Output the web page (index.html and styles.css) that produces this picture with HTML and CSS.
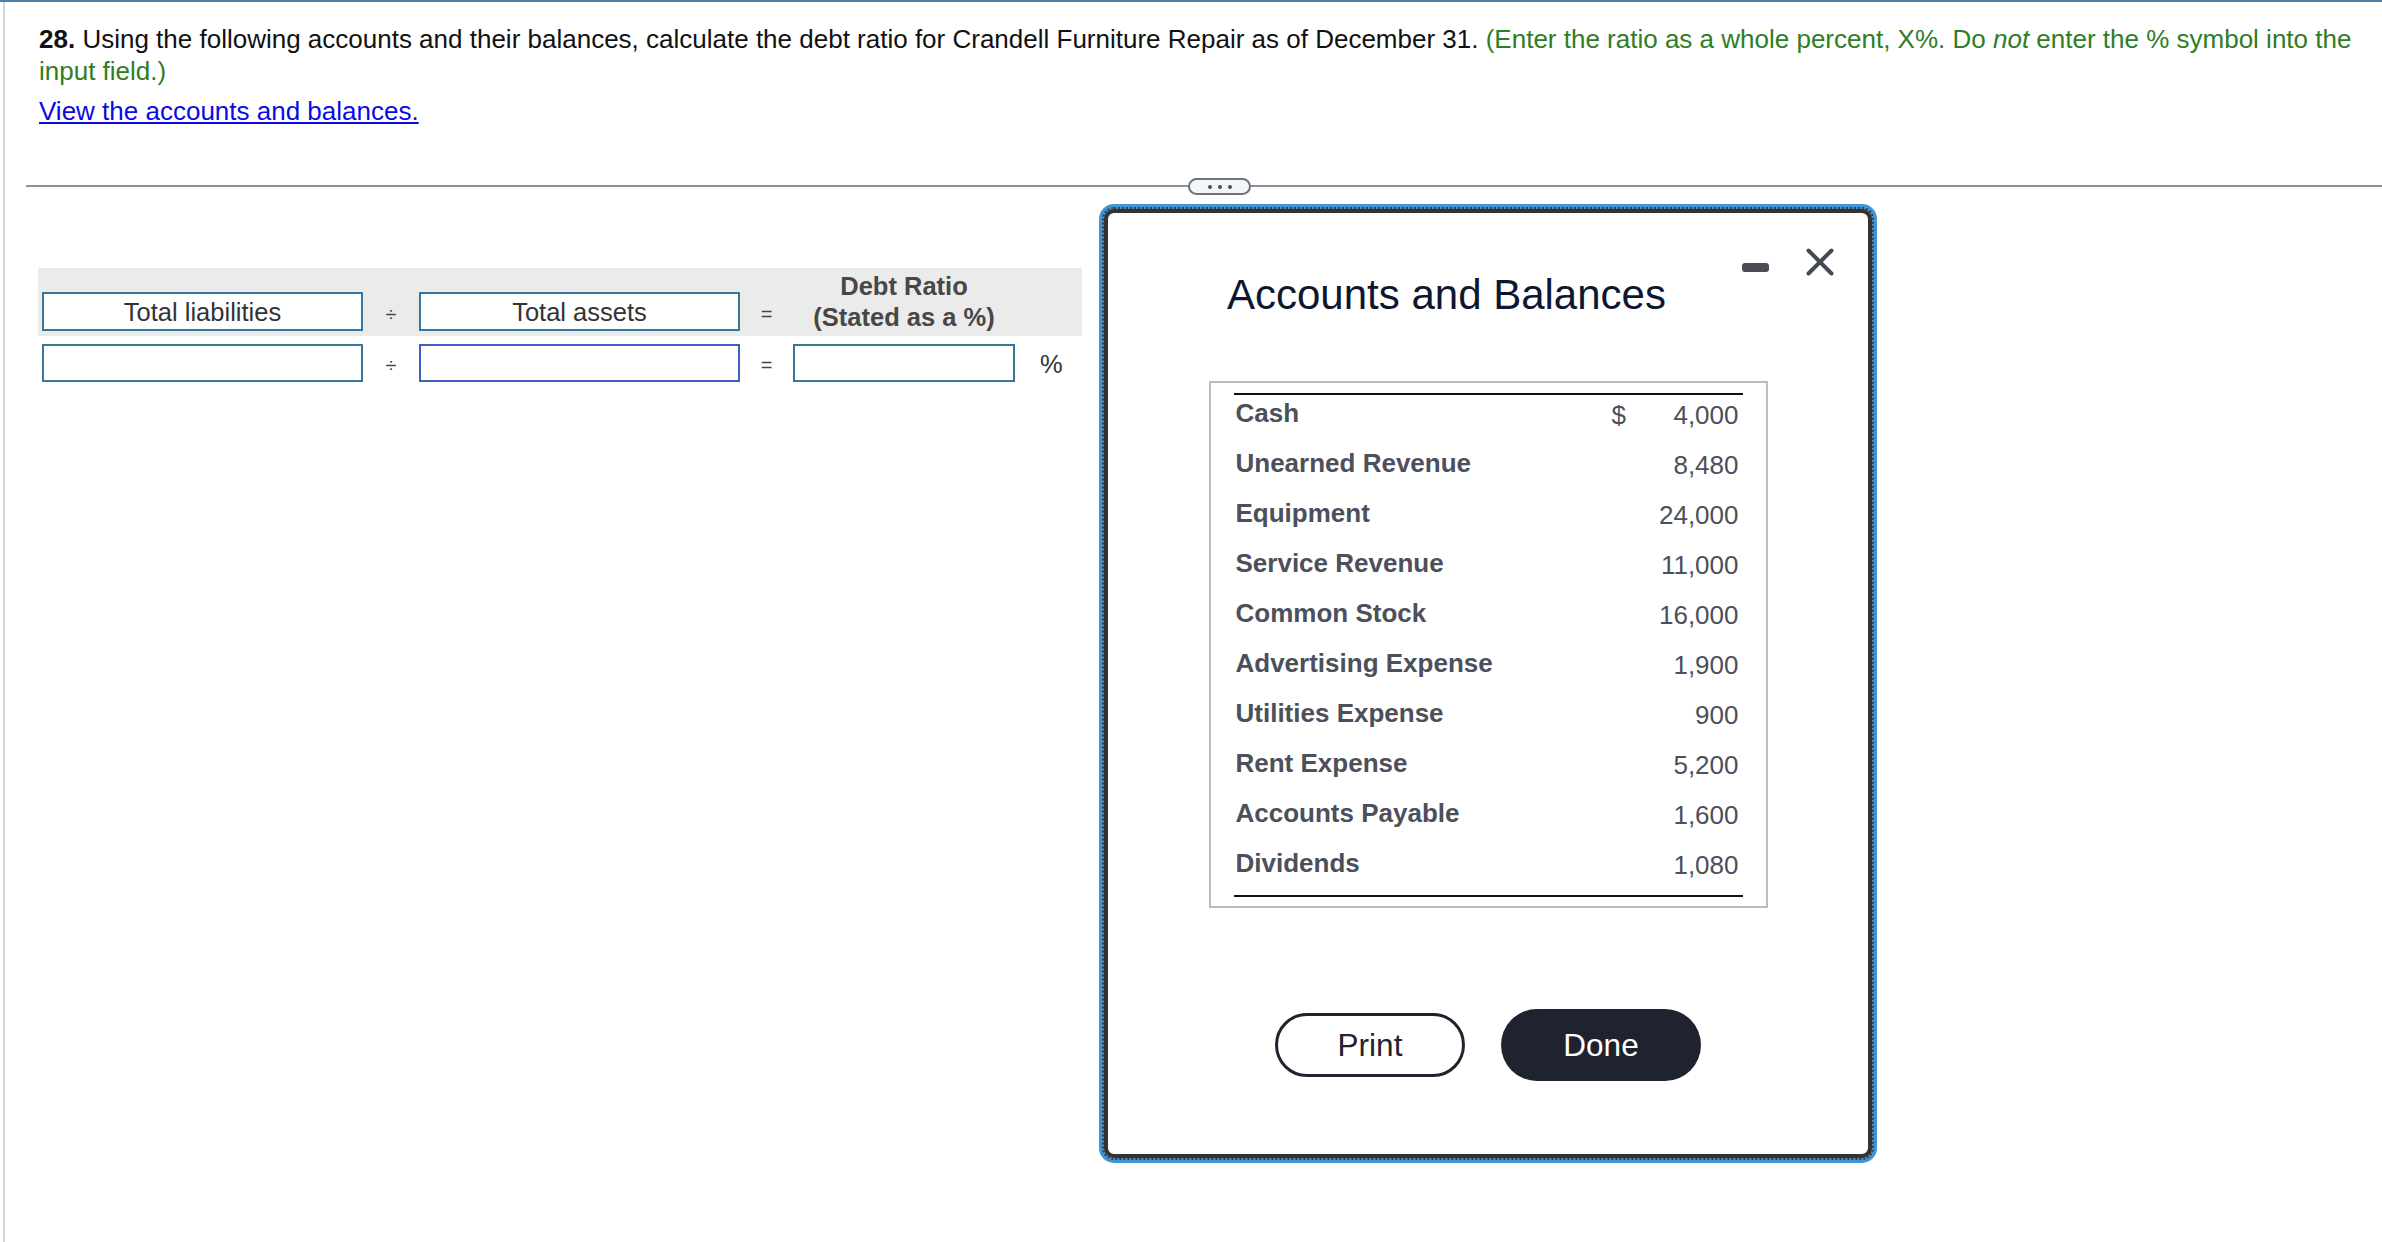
FILE: index.html
```html
<!DOCTYPE html>
<html lang="en">
<head>
    <meta charset="UTF-8">
    <meta name="viewport" content="width=device-width, initial-scale=1.0">
    <title>Debt Ratio</title>
    <link rel="stylesheet" href="styles.css">
</head>
<body>
    <div class="frame">
        <div class="page">
            <div class="question">
                <p class="prompt"><b>28.</b> Using the following accounts and their balances, calculate the debt ratio for Crandell Furniture Repair as of December 31. <span class="hint">(Enter the ratio as a whole percent, X%. Do <i>not</i> enter the % symbol into the</span> <span class="hint">input field.)</span></p>
                <p class="links"><a href="#">View the accounts and balances.</a></p>
            </div>

            <div class="divider">
                <span class="grip"><i></i><i></i><i></i></span>
            </div>

            <!-- Answer table -->
            <div class="work">
                <div class="ratio-head">
                    <div class="label-box">Total liabilities</div>
                    <div class="op">&divide;</div>
                    <div class="label-box">Total assets</div>
                    <div class="op">=</div>
                    <div class="result-label">Debt Ratio<br>(Stated as a %)</div>
                    <div></div>
                </div>
                <div class="ratio-row">
                    <input type="text" class="answer">
                    <div class="op">&divide;</div>
                    <input type="text" class="answer active">
                    <div class="op">=</div>
                    <input type="text" class="answer">
                    <div class="unit">%</div>
                </div>
            </div>
        </div>
    </div>

    <!-- Accounts dialog -->
    <div class="dialog">
        <div class="dialog-header">
            <h2 class="dialog-title">Accounts and Balances</h2>
            <div class="dialog-tools">
                <span class="minimize"></span>
                <svg class="close" width="28" height="28" viewBox="0 0 28 28">
                    <path d="M2.5 2.5 L25.5 25.5 M25.5 2.5 L2.5 25.5" stroke="#434a55" stroke-width="4" stroke-linecap="round" fill="none"/>
                </svg>
            </div>
        </div>
        <div class="acct-box">
            <table class="acct-table">
                <tr><td class="name">Cash</td><td class="dollar">$</td><td class="amount">4,000</td></tr>
                <tr><td class="name">Unearned Revenue</td><td class="dollar"></td><td class="amount">8,480</td></tr>
                <tr><td class="name">Equipment</td><td class="dollar"></td><td class="amount">24,000</td></tr>
                <tr><td class="name">Service Revenue</td><td class="dollar"></td><td class="amount">11,000</td></tr>
                <tr><td class="name">Common Stock</td><td class="dollar"></td><td class="amount">16,000</td></tr>
                <tr><td class="name">Advertising Expense</td><td class="dollar"></td><td class="amount">1,900</td></tr>
                <tr><td class="name">Utilities Expense</td><td class="dollar"></td><td class="amount">900</td></tr>
                <tr><td class="name">Rent Expense</td><td class="dollar"></td><td class="amount">5,200</td></tr>
                <tr><td class="name">Accounts Payable</td><td class="dollar"></td><td class="amount">1,600</td></tr>
                <tr><td class="name">Dividends</td><td class="dollar"></td><td class="amount">1,080</td></tr>
            </table>
        </div>
        <div class="dialog-actions">
            <button class="btn-print">Print</button>
            <button class="btn-done">Done</button>
        </div>
    </div>
</body>
</html>
```

FILE: styles.css
```css
* {
    margin: 0;
    padding: 0;
    box-sizing: border-box;
    font-family: "Liberation Sans", Arial, Helvetica, sans-serif;
}
body {
    background: #fff;
    color: #111;
}
.frame {
    border-top: 2px solid #4f7fa6;
}
.page {
    margin-left: 3px;
    border-left: 2px solid #d0d5dc;
    min-height: 1240px;
}
.question {
    padding: 21px 12px 0 34px;
    font-size: 26px;
    line-height: 32px;
}
.prompt b {
    font-weight: bold;
}
.hint {
    color: #2f7d25;
}
.links {
    margin-top: 8px;
}
.links a {
    color: #0a0ae6;
    text-decoration: underline;
}

/* divider with grip */
.divider {
    position: relative;
    margin: 58px 0 0 21px;
    height: 2px;
    background: #8a929c;
}
.grip {
    position: absolute;
    left: 1162px;
    top: -7px;
    width: 63px;
    height: 17px;
    border: 2px solid #6b7480;
    border-radius: 9px;
    background: #f4f5f7;
    display: flex;
    justify-content: center;
    align-items: center;
    gap: 6px;
}
.grip i {
    width: 4px;
    height: 4px;
    border-radius: 50%;
    background: #4a4f58;
}

/* answer table */
.work {
    margin: 81px 0 0 33px;
    width: 1044px;
}
.ratio-head,
.ratio-row {
    display: grid;
    grid-template-columns: 321px 56px 321px 53px 222px 67px;
    padding-left: 4px;
}
.ratio-head {
    background: #ebebeb;
    height: 68px;
    align-items: end;
    padding-bottom: 5px;
}
.ratio-row {
    margin-top: 7px;
    align-items: center;
}
.label-box {
    height: 39px;
    border: 2px solid #35789a;
    background: #fff;
    font-size: 25.5px;
    line-height: 37px;
    text-align: center;
    color: #333;
}
.op {
    height: 39px;
    padding-top: 5px;
    display: flex;
    align-items: center;
    justify-content: center;
    font-size: 20px;
    color: #444;
}
.result-label {
    font-size: 25.5px;
    line-height: 31px;
    font-weight: bold;
    text-align: center;
    color: #474747;
    margin-bottom: -2px;
}
.answer {
    height: 38px;
    border: 2px solid #35789a;
    background: #fff;
    font-size: 24px;
    padding: 0 6px;
    outline: none;
}
.answer.active {
    border-color: #3d5fc4;
}
.unit {
    padding: 4px 0 0 25px;
    font-size: 25.5px;
    color: #333;
}

/* dialog */
.dialog {
    position: absolute;
    left: 1104px;
    top: 209px;
    width: 768px;
    background: #fff;
    border: 4px solid #333;
    border-radius: 10px;
    outline: 2px dotted #3a3f45;
    box-shadow: 0 0 0 5px #4295d5;
    padding-bottom: 73px;
}
.dialog-header {
    display: flex;
    justify-content: space-between;
    align-items: flex-start;
    padding: 35px 34px 0 119px;
}
.dialog-title {
    margin-top: 23px;
    font-size: 42px;
    line-height: 48px;
    font-weight: normal;
    color: #0d1730;
}
.dialog-tools {
    display: flex;
    align-items: flex-start;
    gap: 37px;
}
.minimize {
    display: block;
    width: 27px;
    height: 9px;
    margin-top: 15px;
    border-radius: 3px;
    background: #4a4d53;
}
.close {
    display: block;
}
.acct-box {
    width: 559px;
    margin: 62px auto 0;
    border: 2px solid #bdbdbd;
    padding: 10px 23px 9px;
}
.acct-table {
    width: 100%;
    border-collapse: collapse;
    border-top: 2px solid #111;
    border-bottom: 2px solid #111;
}
.acct-table td {
    font-size: 26px;
    line-height: 30px;
    color: #4b505b;
    padding: 3px 2px 17px;
    vertical-align: top;
    white-space: nowrap;
}
.acct-table .name {
    font-weight: bold;
}
.acct-table .dollar {
    width: 23px;
    padding-left: 4px;
    padding-top: 5px;
    padding-bottom: 15px;
}
.acct-table .amount {
    width: 112px;
    text-align: right;
    padding-right: 4px;
    padding-top: 5px;
    padding-bottom: 15px;
}
.dialog-actions {
    display: flex;
    justify-content: center;
    align-items: center;
    gap: 36px;
    margin-top: 101px;
}
.dialog-actions button {
    font-size: 31.5px;
    cursor: pointer;
}
.btn-print {
    width: 190px;
    height: 64px;
    border: 3px solid #1f232d;
    border-radius: 32px;
    background: #fff;
    color: #1f232d;
}
.btn-done {
    width: 200px;
    height: 72px;
    border: none;
    border-radius: 36px;
    background: #1f2330;
    color: #fff;
}
```
